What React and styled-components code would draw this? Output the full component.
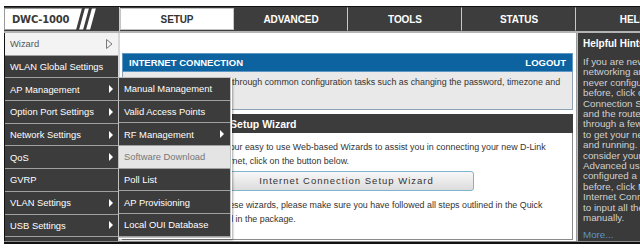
import React from 'react';
import styled, { createGlobalStyle } from 'styled-components';

const GlobalStyle = createGlobalStyle`
  html, body {
    margin: 0;
    padding: 0;
    background: #fff;
    overflow: hidden;
  }
  body {
    font-family: "Liberation Sans", Arial, sans-serif;
  }
`;

const Page = styled.div`
  width: 700px;
  padding: 6px 0 0 4px;
`;

const Header = styled.div`
  display: flex;
  height: 24px;
  background: #3d3d3d;
  border-top: 1px solid #111;
  border-bottom: 2px solid #b4b4b4;
`;

const LogoCell = styled.div`
  width: 116px;
  display: flex;
  align-items: stretch;
  padding: 1px 2px 1px 0;
  box-sizing: border-box;
  border-right: 1px solid #cfcfcf;
`;

const LogoPlate = styled.div`
  width: 72px;
  background: #fff;
  border: 1px solid #9a9a9a;
  border-right: 0;
  display: flex;
  align-items: center;
  padding-left: 7px;
  box-sizing: border-box;
  font-family: "DejaVu Sans", Verdana, sans-serif;
  font-size: 10px;
  font-weight: bold;
  color: #3a3a3a;
  letter-spacing: -0.2px;
`;

const Slashes = styled.svg`
  display: block;
  width: 24px;
  height: 22px;
`;

const Tab = styled.div`
  width: 114px;
  flex: none;
  display: flex;
  align-items: center;
  justify-content: center;
  box-sizing: border-box;
  font-size: 10px;
  font-weight: bold;
  letter-spacing: -0.1px;
  color: ${(p) => (p.$active ? '#333' : '#fff')};
  background: ${(p) => (p.$active ? '#fff' : '#3d3d3d')};
  border: 1px solid ${(p) => (p.$active ? '#c4c4c4' : '#3d3d3d')};
  border-right: 1px solid #c8c8c8;
  margin: ${(p) => (p.$active ? '1px 0' : '0')};
`;

const Body = styled.div`
  display: grid;
  grid-template-columns: 116px 457px 120px;
  height: 208px;
`;

const SideMenu = styled.div`
  position: relative;
  background: #3c3c3c;
  border-left: 1px solid #111;
  border-right: 2px solid #d8d8d8;
  box-sizing: border-box;
`;

const MenuItem = styled.div`
  height: 22.7px;
  box-sizing: border-box;
  display: flex;
  align-items: center;
  justify-content: space-between;
  padding: 0 5px 0 5px;
  border-bottom: 1px solid #a0a0a0;
  font-size: 9.4px;
  color: ${(p) => (p.$light ? '#555' : '#fff')};
  background: ${(p) => (p.$light ? '#f3f3f3' : '#3c3c3c')};
  white-space: nowrap;
`;

const Arrow = styled.span`
  width: 0;
  height: 0;
  border-left: 4px solid #fff;
  border-top: 4px solid transparent;
  border-bottom: 4px solid transparent;
`;

const Flyout = styled.div`
  position: absolute;
  left: 113px;
  top: 44px;
  width: 111px;
  background: #3c3c3c;
  border: 1px solid #c0c0c0;
  box-shadow: 1px 1px 0 #fff, 2px 2px 2px rgba(0, 0, 0, 0.35);
  z-index: 2;
`;

const FlyItem = styled(MenuItem)`
  padding: 0 6px 0 5px;
  color: ${(p) => (p.$dim ? '#777' : '#fff')};
  background: ${(p) => (p.$dim ? '#e4e4e4' : '#3c3c3c')};
`;

const Main = styled.div`
  background: #fff;
  padding: 20px 3px 0 2px;
  border-right: 1px solid #9a9a9a;
  box-sizing: border-box;
  font-size: 8.9px;
  color: #333;
`;

const TitleBar = styled.div`
  height: 19px;
  box-sizing: border-box;
  background: #0d62a0;
  border: 1px solid #5f97c4;
  display: flex;
  align-items: center;
  justify-content: space-between;
  padding: 0 6px;
  color: #fff;
  font-size: 9.5px;
  font-weight: bold;
`;

const Intro = styled.div`
  height: 38px;
  box-sizing: border-box;
  background: #e9e9e9;
  border: 1px solid #8ea2b6;
  border-top: 0;
  padding: 4px 8px 0 6px;
  line-height: 13px;
`;

const SectionHead = styled.div`
  margin-top: 4px;
  height: 19px;
  box-sizing: border-box;
  background: #3c3c3c;
  display: flex;
  align-items: center;
  padding: 0 6px;
  color: #fff;
  font-size: 10.5px;
  font-weight: bold;
`;

const SectionBody = styled.div`
  height: 107px;
  box-sizing: border-box;
  border: 1px solid #8a8a8a;
  border-top: 0;
  padding: 7px 8px 0 6px;
  line-height: 14px;
`;

const WizardButton = styled.div`
  width: 255px;
  height: 20px;
  box-sizing: border-box;
  margin: 3px auto 7px;
  display: flex;
  align-items: center;
  justify-content: center;
  border: 1px solid #7fb3cf;
  border-radius: 3px;
  background: linear-gradient(#f7f7f7, #dcdcdc);
  font-size: 9.5px;
  letter-spacing: 1px;
  color: #333;
`;

const Help = styled.div`
  background: #3a3a3a;
  border-left: 1px solid #bdbdbd;
  padding: 5px 0 0 5px;
  overflow: hidden;
  white-space: nowrap;
  color: #d0d0d0;
  font-size: 9.8px;
`;

const HelpTitle = styled.div`
  font-size: 10px;
  font-weight: bold;
  color: #fff;
  line-height: 12px;
  margin-bottom: 7px;
`;

const HelpText = styled.div`
  line-height: 10.4px;
`;

const MoreLink = styled.div`
  margin-top: 5px;
  line-height: 12px;
  color: #5a93c4;
`;

const Footer = styled.div`
  height: 2px;
  background: #111;
  border-top: 1px solid #8a8a8a;
`;

const sideItems = [
  { label: 'Wizard', light: true, hollow: true },
  { label: 'WLAN Global Settings' },
  { label: 'AP Management', arrow: true },
  { label: 'Option Port Settings', arrow: true },
  { label: 'Network Settings', arrow: true },
  { label: 'QoS', arrow: true },
  { label: 'GVRP' },
  { label: 'VLAN Settings', arrow: true },
  { label: 'USB Settings', arrow: true },
];

const flyItems = [
  { label: 'Manual Management' },
  { label: 'Valid Access Points' },
  { label: 'RF Management', arrow: true },
  { label: 'Software Download', dim: true },
  { label: 'Poll List' },
  { label: 'AP Provisioning' },
  { label: 'Local OUI Database' },
];

const helpLines = [
  'If you are new to',
  'networking and have',
  'never configured a router',
  'before, click on Internet',
  'Connection Setup Wizard',
  'and the router will guide you',
  'through a few simple steps',
  'to get your network up',
  'and running. If you',
  'consider yourself an',
  'Advanced user and have',
  'configured a router',
  'before, click Manual',
  'Internet Connection Setup',
  'to input all the settings',
  'manually.',
];

const tabs = ['SETUP', 'ADVANCED', 'TOOLS', 'STATUS', 'HELP'];

function HollowArrow() {
  return (
    <svg width="7" height="10" viewBox="0 0 7 10">
      <polygon points="0.5,0.5 6,5 0.5,9.5" fill="none" stroke="#777" strokeWidth="1" />
    </svg>
  );
}

export default function App() {
  return (
    <>
      <GlobalStyle />
      <Page>
        <Header>
          <LogoCell>
            <LogoPlate>DWC-1000</LogoPlate>
            <Slashes viewBox="0 0 24 22">
              <rect x="0" y="0" width="24" height="22" fill="#fff" />
              <rect x="0" y="0" width="24" height="1" fill="#9a9a9a" />
              <rect x="0" y="21" width="24" height="1" fill="#9a9a9a" />
              <polygon points="6,0 9,0 3,22 0,22" fill="#3d3d3d" />
              <polygon points="13,0 16,0 10,22 7,22" fill="#3d3d3d" />
              <polygon points="20,0 24,0 24,22 14,22" fill="#3d3d3d" />
            </Slashes>
          </LogoCell>
          {tabs.map((t, i) => (
            <Tab key={t} $active={i === 0}>
              {t}
            </Tab>
          ))}
        </Header>
        <Body>
          <SideMenu>
            {sideItems.map((it) => (
              <MenuItem key={it.label} $light={it.light}>
                {it.label}
                {it.arrow && <Arrow />}
                {it.hollow && <HollowArrow />}
              </MenuItem>
            ))}
            <Flyout>
              {flyItems.map((it) => (
                <FlyItem key={it.label} $dim={it.dim}>
                  {it.label}
                  {it.arrow && <Arrow />}
                </FlyItem>
              ))}
            </Flyout>
          </SideMenu>
          <Main>
            <TitleBar>
              <span>INTERNET CONNECTION</span>
              <span>LOGOUT</span>
            </TitleBar>
            <Intro>
              This wizard will guide you through common configuration tasks such as changing the password, timezone and
              <br />
              internet connection.
            </Intro>
            <SectionHead>Internet Connection Setup Wizard</SectionHead>
            <SectionBody>
              If you would like to utilize our easy to use Web-based Wizards to assist you in connecting your new D-Link
              <br />
              Service Router to the Internet, click on the button below.
              <WizardButton>Internet Connection Setup Wizard</WizardButton>
              Note: Before launching these wizards, please make sure you have followed all steps outlined in the Quick
              <br />
              Installation Guide included in the package.
            </SectionBody>
          </Main>
          <Help>
            <HelpTitle>Helpful Hints..</HelpTitle>
            <HelpText>
              {helpLines.map((l) => (
                <div key={l}>{l}</div>
              ))}
            </HelpText>
            <MoreLink>More...</MoreLink>
          </Help>
        </Body>
        <Footer />
      </Page>
    </>
  );
}
